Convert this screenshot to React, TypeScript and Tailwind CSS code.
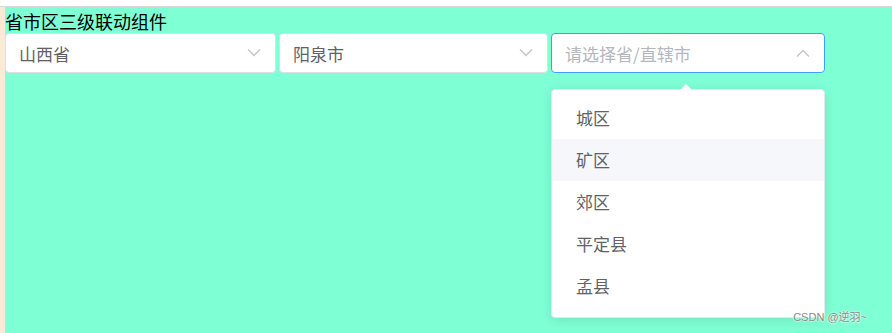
const font = { fontFamily: '"Noto Sans CJK SC", "Noto Sans", sans-serif' };

function Chevron({ up = false }: { up?: boolean }) {
  return (
    <svg width="14" height="8" viewBox="0 0 14 8" fill="none" className="shrink-0">
      <path
        d={up ? "M1 7.5 L7 1.5 L13 7.5" : "M1 0.5 L7 6.5 L13 0.5"}
        stroke="#c0c4cc"
        strokeWidth="1.3"
      />
    </svg>
  );
}

function Select({
  value,
  placeholder,
  open = false,
  width = "w-[271px]",
}: {
  value?: string;
  placeholder?: string;
  open?: boolean;
  width?: string;
}) {
  return (
    <div
      className={`flex h-[40px] ${width} items-center justify-between rounded-[4px] border bg-white pl-[13px] pr-[14px] ${
        open ? "border-[#409eff]" : "border-[#dcdfe6]"
      }`}
    >
      <span className={`text-[17px] leading-none ${value ? "text-[#606266]" : "text-[#b4b7be]"}`}>
        {value ?? placeholder}
      </span>
      <Chevron up={open} />
    </div>
  );
}

const areas = ["城区", "矿区", "郊区", "平定县", "孟县"];

export default function App() {
  return (
    <div className="h-[333px] w-[892px] overflow-hidden bg-white" style={font}>
      <div className="mt-[6px] h-[1px] bg-[#d9d9d9]" />
      <div className="flex h-[326px]">
        <div className="w-[5px] bg-[#faebd7]" />
        <div className="relative flex-1 bg-[#7fffd4]">
          <h1 className="pt-[2px] text-[18px] leading-[24px] text-black">省市区三级联动组件</h1>
          <div className="flex gap-[3px]">
            <Select value="山西省" width="w-[271px]" />
            <Select value="阳泉市" width="w-[269px]" />
            <div className="relative">
              <Select placeholder="请选择省/直辖市" open width="w-[274px]" />
              <div className="absolute left-0 top-[56px] w-[274px] rounded-[4px] border border-[#e4e7ed] bg-white pt-[7px] pb-[10px] shadow-[0_2px_12px_rgba(0,0,0,0.1)]">
                <div className="absolute -top-[6px] left-[128px] h-0 w-0 border-x-[6px] border-b-[6px] border-x-transparent border-b-white" />
                {areas.map((a, i) => (
                  <div
                    key={a}
                    className={`flex h-[42px] items-center pl-[24px] text-[17px] text-[#606266] ${
                      i === 1 ? "bg-[#f5f7fa]" : ""
                    }`}
                  >
                    {a}
                  </div>
                ))}
              </div>
            </div>
          </div>
          <span
            className="absolute right-[25px] bottom-[8px] text-[11px] text-[#8a8a8a]"
            style={{
              fontFamily: '"Liberation Sans", "Noto Sans CJK SC", sans-serif',
              textShadow: "0 0 2px #fff, 0 0 2px #fff",
            }}
          >
            CSDN @逆羽~
          </span>
        </div>
      </div>
    </div>
  );
}
